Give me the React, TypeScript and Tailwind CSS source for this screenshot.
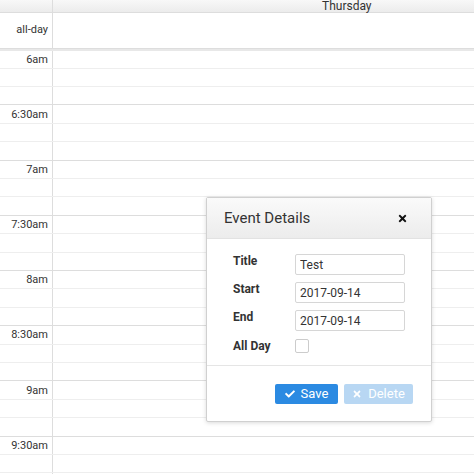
import React from 'react';
import { FaCheck, FaTimes } from 'react-icons/fa';

const labels = ['6am', '6:30am', '7am', '7:30am', '8am', '8:30am', '9am', '9:30am'];

const slots = Array.from({ length: 24 }, (_, i) => ({
    label: i % 3 === 0 ? labels[i / 3] : '',
    major: i % 3 === 0,
    first: i === 0,
}));

const FieldRow = ({ label, children }: { label: string; children: React.ReactNode }) => (
    <div className="flex flex-row items-start h-[21px]">
        <div className="w-[62px] text-[12px] font-bold text-[#333] leading-[14px]">{label}</div>
        {children}
    </div>
);

const TextField = ({ value }: { value: string }) => (
    <input
        type="text"
        readOnly
        value={value}
        className="w-[110px] h-[21px] border border-[#d6d6d6] rounded-[2px] px-[4px] text-[12px] text-[#333] outline-none"
    />
);

const App = () => {
    return (
        <div className="relative w-[474px] h-[474px] overflow-hidden bg-white font-['Roboto','Liberation_Sans',sans-serif] text-[#333]">
            {/* header */}
            <div className="flex flex-row h-[13px] border-b border-[#ddd] bg-gradient-to-b from-[#f8f8f8] to-[#ececec]">
                <div className="w-[53px] shrink-0 border-r border-[#ddd]" />
                <div className="flex-1 pl-[269px] text-[12px] leading-[12px] text-[#333]">Thursday</div>
            </div>
            {/* all-day */}
            <div className="flex flex-row h-[35px]">
                <div className="w-[53px] shrink-0 border-r border-[#ddd] flex items-center justify-end pr-[4px] text-[11px]">all-day</div>
                <div className="flex-1" />
            </div>
            <div className="h-[3px] bg-[#e8e8e8] border-t border-[#ddd]" />
            {/* time slots */}
            <div className="flex flex-col">
                {slots.map((s, i) => (
                    <div
                        key={i}
                        className={`flex flex-row ${s.first ? 'h-[16.7px]' : 'h-[18.4px] border-t'} ${s.major ? 'border-[#ddd]' : 'border-[#eee]'}`}
                    >
                        <div className="w-[53px] shrink-0 border-r border-[#ddd] flex items-center justify-end pr-[4px] text-[11px] leading-none whitespace-nowrap">
                            {s.label}
                        </div>
                        <div className="flex-1" />
                    </div>
                ))}
            </div>

            {/* event details dialog */}
            <div className="absolute left-[206px] top-[197px] w-[226px] h-[225px] bg-white border border-[#d0d0d0] rounded-[2px] shadow-[0_1px_4px_rgba(0,0,0,0.15)] flex flex-col">
                <div className="h-[41px] shrink-0 flex flex-row items-center justify-between pl-[17px] pr-[23px] bg-gradient-to-b from-[#fafafa] to-[#ececec] border-b border-[#e2e2e2]">
                    <span className="text-[15px] text-[#333]">Event Details</span>
                    <FaTimes className="text-[#111]" size={11} />
                </div>
                <div className="flex flex-col gap-[7px] pt-[15px] pl-[26px] h-[127px] border-b border-[#e5e5e5]">
                    <FieldRow label="Title"><TextField value="Test" /></FieldRow>
                    <FieldRow label="Start"><TextField value="2017-09-14" /></FieldRow>
                    <FieldRow label="End"><TextField value="2017-09-14" /></FieldRow>
                    <div className="flex flex-row items-center h-[16px]">
                        <div className="w-[62px] text-[12px] font-bold text-[#333] leading-[14px]">All Day</div>
                        <div className="w-[14px] h-[14px] border border-[#ccc] rounded-[2px] bg-white" />
                    </div>
                </div>
                <div className="flex flex-row justify-end gap-[6px] pt-[18px] pr-[18px]">
                    <button className="w-[63px] h-[20px] bg-[#2b8ae2] rounded-[2px] text-white text-[13px] flex flex-row items-center justify-center gap-[6px]">
                        <FaCheck size={10} />
                        <span>Save</span>
                    </button>
                    <button className="w-[69px] h-[20px] bg-[#b8d7f3] rounded-[2px] text-white text-[13px] flex flex-row items-center justify-center gap-[6px]">
                        <FaTimes size={10} />
                        <span>Delete</span>
                    </button>
                </div>
            </div>
        </div>
    );
};

export default App;
